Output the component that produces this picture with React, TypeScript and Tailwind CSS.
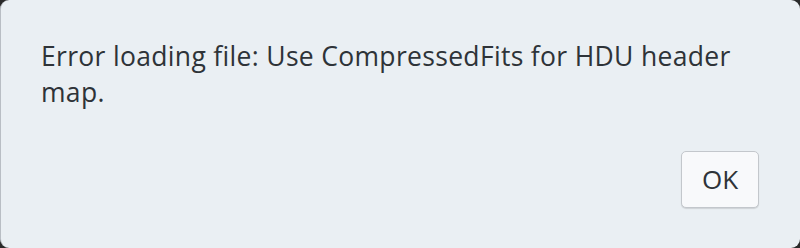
import React from 'react';

export default function App() {
  return (
    <div className="w-[800px] h-[248px] bg-[#2a2a2a]">
      <div
        className="flex h-full w-full flex-col justify-between rounded-[9px] border-l border-[#b9bec4] bg-[#eaeff3] pl-[40px] pr-[41px] pt-[38px] pb-[40px] text-[#2e3338]"
        style={{ fontFamily: '"Open Sans", "Noto Sans", sans-serif' }}
      >
        <p className="text-[26.5px] leading-[36px] tracking-[0.32px]">
          Error loading file: Use CompressedFits for HDU header map.
        </p>
        <div className="flex justify-end">
          <button className="h-[57px] w-[78px] rounded-[5px] border border-[#c3c7cc] bg-[#f8f9fb] text-[26px] text-[#2e3338] shadow-[0_1px_1px_rgba(0,0,0,0.12)]">
            OK
          </button>
        </div>
      </div>
    </div>
  );
}
